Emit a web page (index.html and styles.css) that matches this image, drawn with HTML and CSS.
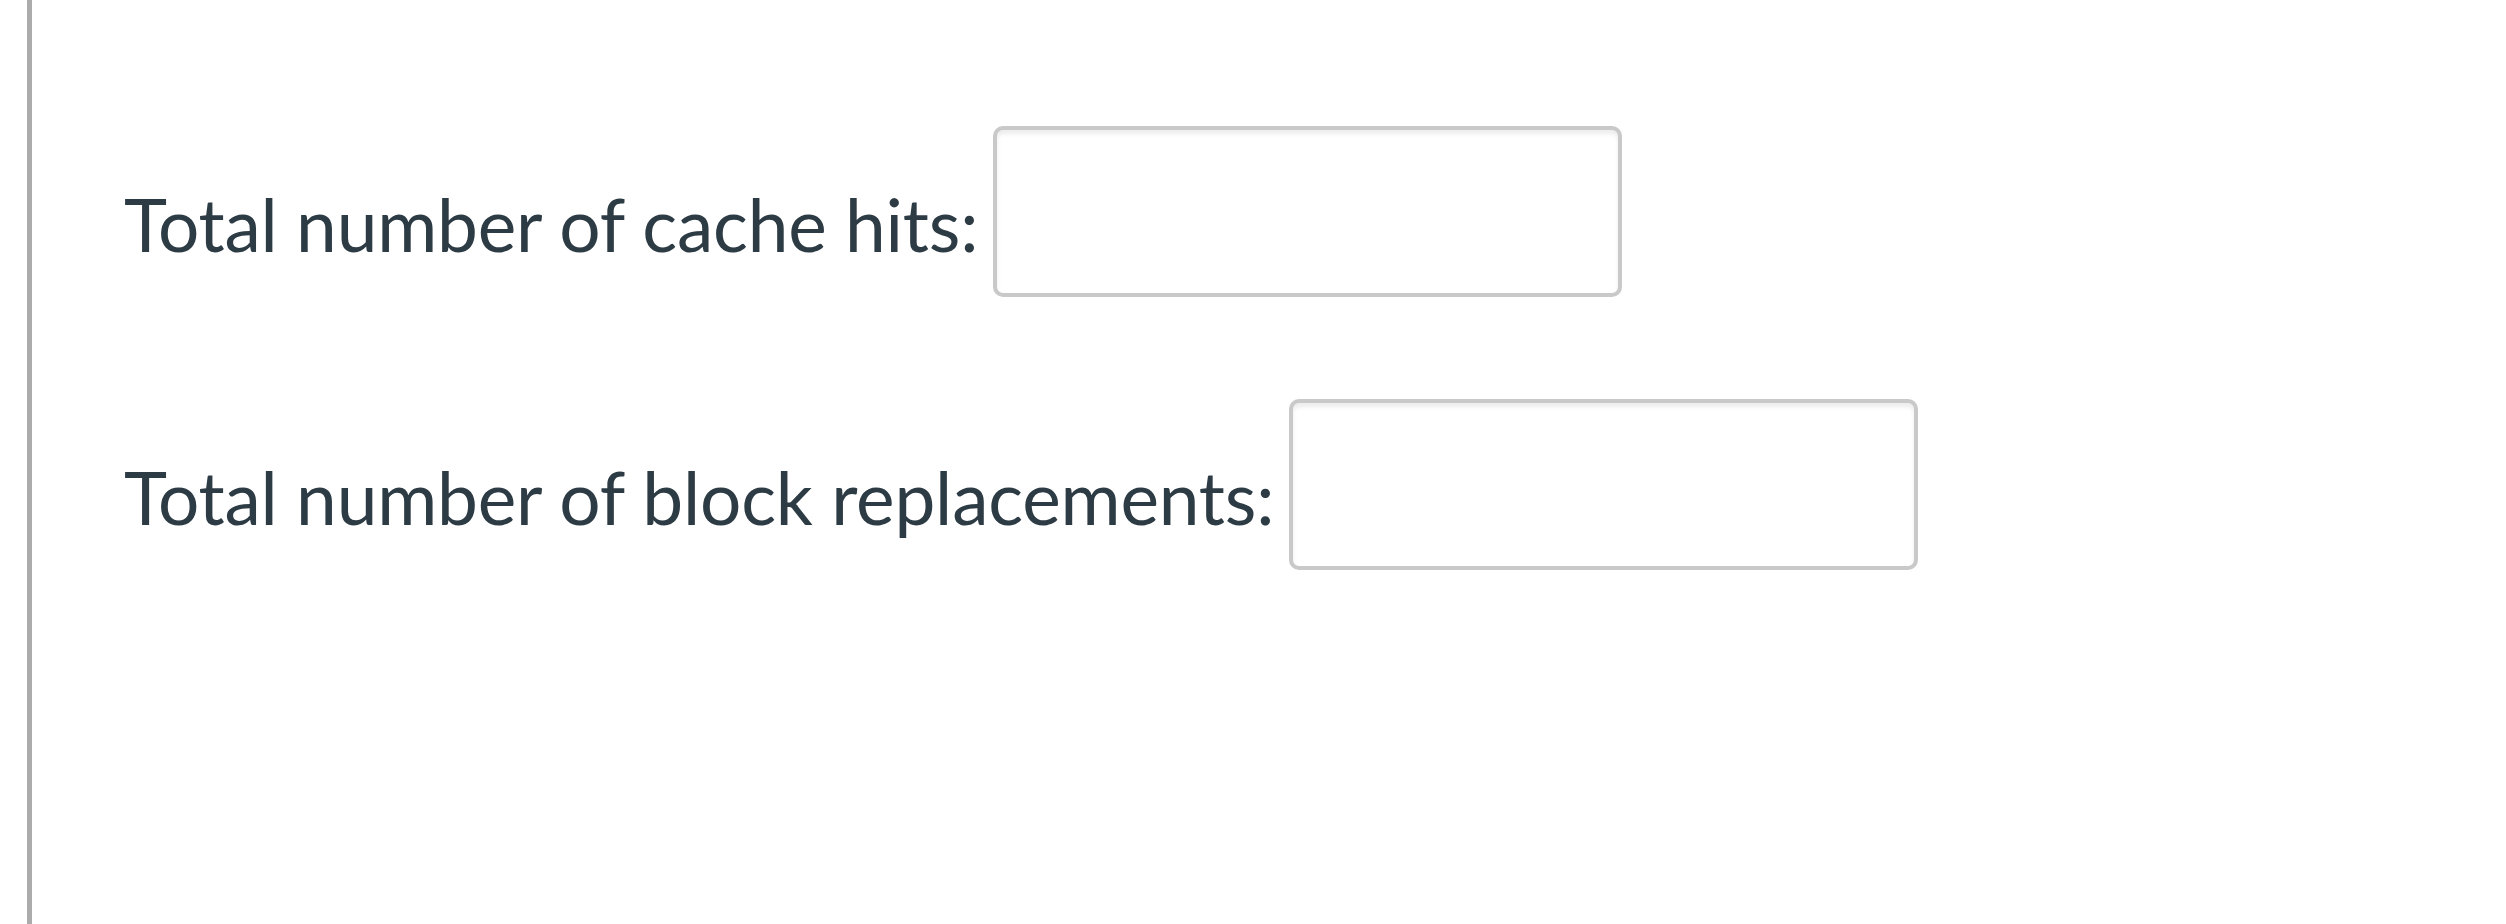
FILE: index.html
```html
<!DOCTYPE html>
<html lang="en">
<head>
<meta charset="utf-8">
<title>Quiz question</title>
<link rel="stylesheet" href="styles.css">
</head>
<body>
<div class="page">
  <div class="question">
    <div class="row">
      <label class="label" for="hits">Total number of cache hits:</label>
      <input class="answer" id="hits" type="text">
    </div>
    <div class="row">
      <label class="label" for="repl">Total number of block replacements:</label>
      <input class="answer" id="repl" type="text">
    </div>
  </div>
</div>
</body>
</html>
```

FILE: styles.css
```css
html, body {
  margin: 0;
  padding: 0;
  background: #ffffff;
  height: 100%;
}
.page {
  height: 100%;
  padding-left: 27px;
  box-sizing: border-box;
}
.question {
  height: 100%;
  border-left: 5px solid #acacac;
  box-sizing: border-box;
  padding: 126px 0 0 92px;
  display: flex;
  flex-direction: column;
  gap: 102px;
  font-family: Lato, "Open Sans", sans-serif;
  color: #2d3b45;
}
.row {
  display: flex;
  align-items: flex-end;
  gap: 15px;
}
.label {
  font-size: 73px;
  line-height: 1;
  margin-bottom: 36px;
  white-space: nowrap;
  letter-spacing: -0.2px;
}
.answer {
  width: 629px;
  height: 171px;
  box-sizing: border-box;
  border: 4px solid #c9c9c9;
  border-radius: 10px;
  background: #ffffff;
  box-shadow: inset 0 4px 4px rgba(0, 0, 0, 0.075);
  margin: 0;
  padding: 0;
  outline: none;
}
```
